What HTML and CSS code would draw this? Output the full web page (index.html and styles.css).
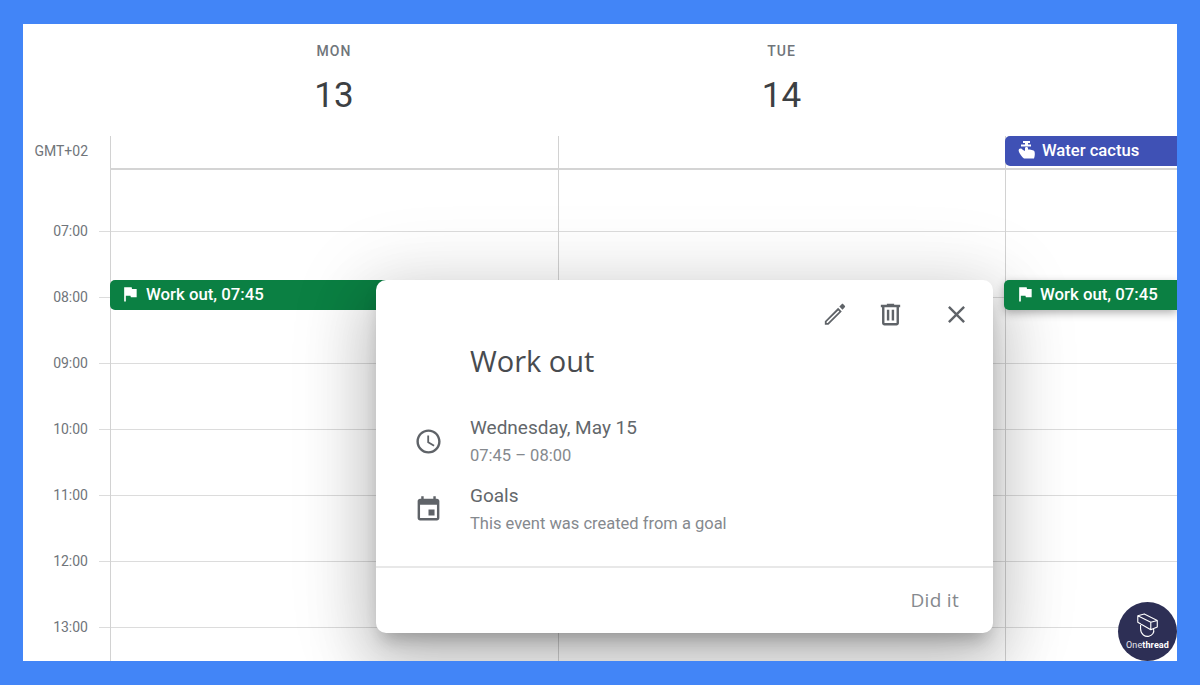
FILE: index.html
```html
<!DOCTYPE html>
<html>
<head>
	<meta charset="utf-8">
	<meta name="viewport" content="width=device-width, initial-scale=1">
	<title>Calendar</title>
	<link rel="stylesheet" href="styles.css">
</head>
<body>

	<div class="cal">
		<div class="cal-head">
			<div class="day-title"><span class="dow">MON</span><span class="date">13</span></div>
			<div class="day-title"><span class="dow">TUE</span><span class="date">14</span></div>
		</div>

		<div class="allday">
			<div class="tz">GMT+02</div>
			<div class="allday-cell"></div>
			<div class="allday-cell"></div>
			<div class="allday-cell">
				<div class="chip chip-blue">
					<svg class="chip-icon" viewBox="0 0 20 20"><path d="M6 1h7v2h-2v1.500h3v2H4v-2h4V3H6zM2 9c1.500-1 3-.5 4 1l2 1V8c0-1.500 3-1.500 3 0v1.500c2 0 6 .5 6.500 2 .5 2 .5 4-.5 7H7C5 17 3 14 2 12c-.5-1-.5-2 0-3z"/></svg>
					Water cactus
				</div>
			</div>
		</div>

		<div class="grid">
			<div class="gutter">
				<div class="slot slot-first"><span class="time">07:00</span><i class="tick"></i></div>
				<div class="slot"><span class="time">08:00</span><i class="tick"></i></div>
				<div class="slot"><span class="time">09:00</span><i class="tick"></i></div>
				<div class="slot"><span class="time">10:00</span><i class="tick"></i></div>
				<div class="slot"><span class="time">11:00</span><i class="tick"></i></div>
				<div class="slot"><span class="time">12:00</span><i class="tick"></i></div>
				<div class="slot"><span class="time">13:00</span><i class="tick"></i></div>
			</div>

			<div class="col">
				<div class="cell cell-first"></div>
				<div class="cell"></div><div class="cell"></div><div class="cell"></div>
				<div class="cell"></div><div class="cell"></div><div class="cell"></div>
				<div class="cell-last"></div>
				<div class="chip chip-green chip-event">
					<svg class="chip-icon" viewBox="0 0 24 24"><path d="M14.400 6L14 4H5v17h2v-7h5.600l.4 2h7V6z"/></svg>
					Work out, 07:45
				</div>
			</div>
			<div class="col">
				<div class="cell cell-first"></div>
				<div class="cell"></div><div class="cell"></div><div class="cell"></div>
				<div class="cell"></div><div class="cell"></div><div class="cell"></div>
				<div class="cell-last"></div>
			</div>
			<div class="col">
				<div class="cell cell-first"></div>
				<div class="cell"></div><div class="cell"></div><div class="cell"></div>
				<div class="cell"></div><div class="cell"></div><div class="cell"></div>
				<div class="cell-last"></div>
				<div class="chip chip-green chip-event chip-right">
					<svg class="chip-icon" viewBox="0 0 24 24"><path d="M14.400 6L14 4H5v17h2v-7h5.600l.4 2h7V6z"/></svg>
					Work out, 07:45
				</div>
			</div>
		</div>

		<div class="popup">
			<div class="popup-tools">
				<svg class="icon" viewBox="0 0 24 24"><path fill-rule="evenodd" d="M4 20.500v-3L15 6.500l3 3L7 20.500zM5.500 19h.9L16 9.500l-.9-.9L5.500 18.100zM16 5.400l1.900-1.900c.4-.4 1-.4 1.400 0l1.200 1.200c.4.4.4 1 0 1.400L18.600 8z"/></svg>
				<svg class="icon" viewBox="0 0 24 24"><path d="M15 4V3H9v1H4v2h1v13c0 1.100.9 2 2 2h10c1.100 0 2-.9 2-2V6h1V4h-5zm2 15H7V6h10v13zM9 8h2v9H9zm4 0h2v9h-2z"/></svg>
				<svg class="icon icon-close" viewBox="0 0 24 24"><path d="M19 6.410L17.590 5 12 10.590 6.410 5 5 6.410 10.590 12 5 17.590 6.410 19 12 13.410 17.590 19 19 17.590 13.410 12z"/></svg>
			</div>

			<div class="popup-title">Work out</div>

			<div class="popup-row">
				<svg class="icon" viewBox="0 0 24 24"><path d="M11.990 2C6.470 2 2 6.480 2 12s4.470 10 9.990 10C17.520 22 22 17.520 22 12S17.520 2 11.990 2zM12 20c-4.420 0-8-3.580-8-8s3.580-8 8-8 8 3.580 8 8-3.580 8-8 8zm.5-13H11v6l5.250 3.150.75-1.230-4.500-2.670z"/></svg>
				<div>
					<div class="row-main">Wednesday, May 15</div>
					<div class="row-sub">07:45 – 08:00</div>
				</div>
			</div>

			<div class="popup-row">
				<svg class="icon" viewBox="0 0 24 24"><path d="M17 12h-5v5h5v-5zM16 1v2H8V1H6v2H5c-1.110 0-1.990.9-1.990 2L3 19c0 1.100.89 2 2 2h14c1.100 0 2-.9 2-2V5c0-1.100-.9-2-2-2h-1V1h-2zm3 18H5V8h14v11z"/></svg>
				<div>
					<div class="row-main">Goals</div>
					<div class="row-sub">This event was created from a goal</div>
				</div>
			</div>

			<div class="popup-foot">Did it</div>
		</div>

		<div class="logo">
			<svg class="logo-mark" viewBox="0 0 30 28"><path d="M4 3L11 1 25 8V15L18 18 4 10zM4 3V10M4 3L18 10V18M18 10L25 8M7 11V17C7 23 12 26 16 25 20 24 22 21 21 17"/></svg>
			<span class="logo-text">One<b>thread</b></span>
		</div>
	</div>

</body>
</html>
```

FILE: styles.css
```css
*{
    margin:0;
    padding:0;
    box-sizing: border-box;
}
body{
    background: #4285f7;
    padding: 24px 23px;
    height: 685px;
    overflow: hidden;
    font-family: Roboto, "Liberation Sans", sans-serif;
}
.cal{
    position: relative;
    background: #fff;
    height: 637px;
    overflow: hidden;
}

/* day titles */
.cal-head{
    display: grid;
    grid-template-columns: 448px 447px;
    padding-left: 87px;
    height: 112px;
}
.day-title{
    display: flex;
    flex-direction: column;
    align-items: center;
    padding-top: 18px;
}
.dow{
    font-size: 14px;
    line-height: 18px;
    font-weight: 500;
    letter-spacing: 1px;
    color: #70757a;
}
.date{
    font-size: 35px;
    line-height: 44px;
    margin-top: 14px;
    color: #3c4043;
}

/* all day row */
.allday{
    display: grid;
    grid-template-columns: 87px 448px 447px 1fr;
    height: 34px;
}
.tz{
    font-size: 14px;
    line-height: 30px;
    color: #70757a;
    text-align: right;
    padding-right: 22px;
}
.allday-cell{
    border-left: 1px solid #d2d2d2;
    border-bottom: 2px solid #d4d4d4;
}

/* hours */
.grid{
    display: grid;
    grid-template-columns: 87px 448px 447px 1fr;
}
.slot{
    position: relative;
    height: 66px;
    display: flex;
    justify-content: flex-end;
    align-items: flex-end;
}
.slot-first{
    height: 62px;
}
.time{
    font-size: 14px;
    line-height: 16px;
    color: #70757a;
    margin-right: 22px;
    margin-bottom: -7px;
}
.tick{
    position: absolute;
    right: 0;
    bottom: 0;
    width: 11px;
    border-bottom: 1px solid #dcdcdc;
}
.col{
    position: relative;
    border-left: 1px solid #d2d2d2;
}
.cell{
    height: 66px;
    border-bottom: 1px solid #dcdcdc;
}
.cell-first{
    height: 62px;
}
.cell-last{
    height: 33px;
}

/* events */
.chip{
    display: flex;
    align-items: center;
    gap: 6px;
    color: #fff;
    font-size: 16.800px;
    font-weight: 500;
    height: 30px;
    padding: 0 0 2px 10px;
    border-radius: 5px 0 0 5px;
}
.chip-icon{
    width: 20px;
    height: 20px;
    fill: #fff;
    flex: none;
}
.chip-blue{
    background: #3f51b5;
    margin-left: -1px;
    padding-left: 12px;
    gap: 5px;
    font-size: 16.600px;
}
.chip-green{
    background: #0b8043;
}
.chip-event{
    position: absolute;
    top: 110px;
    left: -1px;
    right: 0;
}
.chip-right{
    left: -2px;
    padding-left: 11px;
    gap: 5px;
    z-index: 2;
    box-shadow: 0 3px 8px rgba(0,0,0,.3);
}

/* popup */
.popup{
    position: absolute;
    left: 353px;
    top: 256px;
    width: 617px;
    height: 353px;
    background: #fff;
    border-radius: 10px;
    display: flex;
    flex-direction: column;
    box-shadow: 0 30px 60px 10px rgba(0,0,0,.17), 0 10px 80px 15px rgba(0,0,0,.1), 0 12px 18px -6px rgba(0,0,0,.25);
}
.popup-tools{
    display: flex;
    justify-content: flex-end;
    gap: 27px;
    padding: 20px 22px 0 0;
}
.icon{
    width: 29px;
    height: 29px;
    fill: #5f6368;
    flex: none;
}
.icon-close{
    margin-left: 10px;
}
.popup-title{
    font-family: "Open Sans", Roboto, sans-serif;
    font-size: 29px;
    line-height: 50px;
    color: #484b4f;
    margin: 7px 0 27px 94px;
}
.popup-row{
    display: flex;
    align-items: center;
    gap: 27px;
    padding-left: 38px;
    margin-bottom: 12px;
}
.row-main{
    font-size: 19px;
    line-height: 28px;
    padding-top: 1px;
    color: #63676b;
}
.row-sub{
    font-size: 16.500px;
    line-height: 27px;
    color: #85898e;
}
.popup-foot{
    margin-top: auto;
    height: 67px;
    border-top: 2px solid #e8e8e8;
    display: flex;
    align-items: center;
    justify-content: flex-end;
    padding: 0 34px 2px 0;
    font-family: "Open Sans", Roboto, sans-serif;
    font-size: 19px;
    letter-spacing: .3px;
    color: #85898e;
}

/* badge */
.logo{
    position: absolute;
    right: 0;
    bottom: 0;
    width: 59px;
    height: 59px;
    border-radius: 50%;
    background: #2d2f55;
    display: flex;
    flex-direction: column;
    align-items: center;
    padding-top: 11px;
}
.logo-mark{
    width: 28px;
    height: 26px;
    fill: none;
    stroke: #fff;
    stroke-width: 1.200;
    stroke-linejoin: round;
}
.logo-text{
    font-size: 9px;
    line-height: 11px;
    letter-spacing: .1px;
    color: #e6e6ee;
    margin-top: 1px;
}
.logo-text b{
    font-weight: 700;
    color: #fff;
}
```
